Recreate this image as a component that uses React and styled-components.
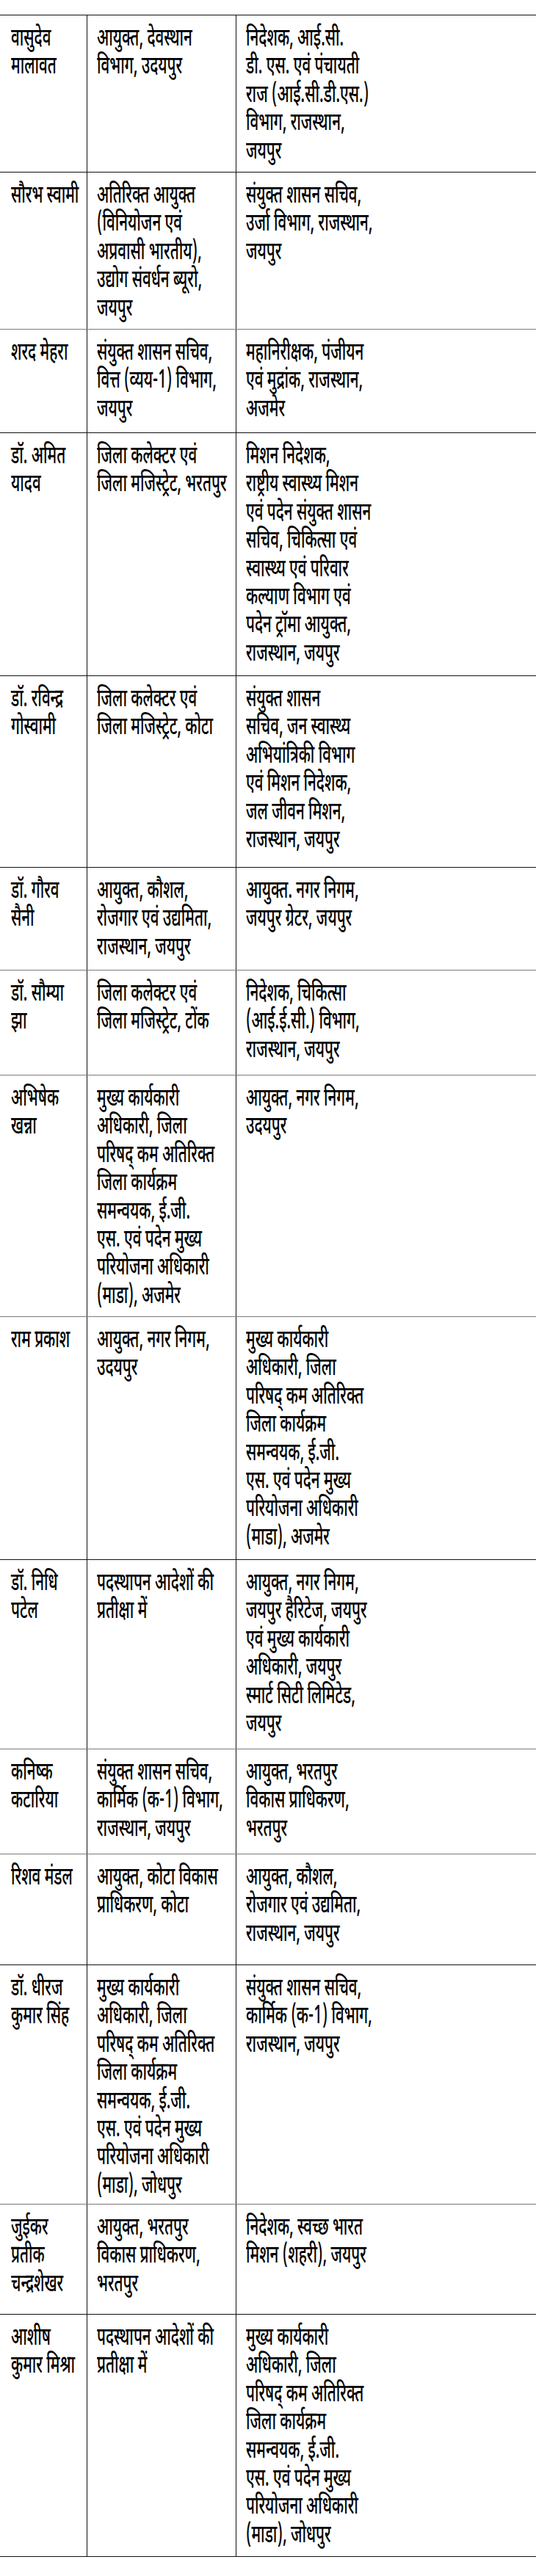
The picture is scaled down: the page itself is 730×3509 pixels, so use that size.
import React from "react";
import styled, { createGlobalStyle } from "styled-components";

const GlobalStyle = createGlobalStyle`
  html, body {
    margin: 0;
    padding: 0;
    background: #fff;
  }
  body {
    font-family: "Noto Sans Devanagari", "Noto Sans", sans-serif;
    color: #000;
    overflow-x: hidden;
  }
`;

const Page = styled.div`
  width: 730px;
  padding-top: 20px;
  padding-bottom: 27px;
`;

const Table = styled.div`
  border-top: 1px solid #111;
`;

const Row = styled.div`
  display: grid;
  grid-template-columns: 119px 203px 1fr;
  height: ${(p) => p.h}px;
  border-bottom: 1px solid ${(p) => (p.soft ? "#7a7a7a" : "#111")};
  box-sizing: border-box;
`;

const Cell = styled.div`
  padding: 14px 0 0 ${(p) => (p.first ? 15 : 13)}px;
  border-right: ${(p) => (p.last ? "none" : "1px solid #111")};
  font-size: 34px;
  font-weight: 500;
  line-height: 38.4px;
  min-width: 0;
`;

// the source type is a tall, narrow Devanagari face
const Line = styled.div`
  white-space: nowrap;
  transform: scaleX(0.605);
  transform-origin: 0 50%;
`;

const madaAjmer = [
  "मुख्य कार्यकारी",
  "अधिकारी, जिला",
  "परिषद् कम अतिरिक्त",
  "जिला कार्यक्रम",
  "समन्वयक, ई.जी.",
  "एस. एवं पदेन मुख्य",
  "परियोजना अधिकारी",
  "(माडा), अजमेर",
];

const madaJodhpur = [...madaAjmer.slice(0, 7), "(माडा), जोधपुर"];

const rows = [
  {
    h: 214,
    cells: [
      ["वासुदेव", "मालावत"],
      ["आयुक्त, देवस्थान", "विभाग, उदयपुर"],
      ["निदेशक, आई.सी.", "डी. एस. एवं पंचायती", "राज (आई.सी.डी.एस.)", "विभाग, राजस्थान,", "जयपुर"],
    ],
  },
  {
    h: 214,
    soft: true,
    cells: [
      ["सौरभ स्वामी"],
      ["अतिरिक्त आयुक्त", "(विनियोजन एवं", "अप्रवासी भारतीय),", "उद्योग संवर्धन ब्यूरो,", "जयपुर"],
      ["संयुक्त शासन सचिव,", "उर्जा विभाग, राजस्थान,", "जयपुर"],
    ],
  },
  {
    h: 141,
    cells: [
      ["शरद मेहरा"],
      ["संयुक्त शासन सचिव,", "वित्त (व्यय-1) विभाग,", "जयपुर"],
      ["महानिरीक्षक, पंजीयन", "एवं मुद्रांक, राजस्थान,", "अजमेर"],
    ],
  },
  {
    h: 331,
    cells: [
      ["डॉ. अमित", "यादव"],
      ["जिला कलेक्टर एवं", "जिला मजिस्ट्रेट, भरतपुर"],
      [
        "मिशन निदेशक,",
        "राष्ट्रीय स्वास्थ्य मिशन",
        "एवं पदेन संयुक्त शासन",
        "सचिव, चिकित्सा एवं",
        "स्वास्थ्य एवं परिवार",
        "कल्याण विभाग एवं",
        "पदेन ट्रॉमा आयुक्त,",
        "राजस्थान, जयपुर",
      ],
    ],
  },
  {
    h: 261,
    cells: [
      ["डॉ. रविन्द्र", "गोस्वामी"],
      ["जिला कलेक्टर एवं", "जिला मजिस्ट्रेट, कोटा"],
      ["संयुक्त शासन", "सचिव, जन स्वास्थ्य", "अभियांत्रिकी विभाग", "एवं मिशन निदेशक,", "जल जीवन मिशन,", "राजस्थान, जयपुर"],
    ],
  },
  {
    h: 140,
    soft: true,
    cells: [
      ["डॉ. गौरव", "सैनी"],
      ["आयुक्त, कौशल,", "रोजगार एवं उद्यमिता,", "राजस्थान, जयपुर"],
      ["आयुक्त. नगर निगम,", "जयपुर ग्रेटर, जयपुर"],
    ],
  },
  {
    h: 143,
    soft: true,
    cells: [
      ["डॉ. सौम्या", "झा"],
      ["जिला कलेक्टर एवं", "जिला मजिस्ट्रेट, टोंक"],
      ["निदेशक, चिकित्सा", "(आई.ई.सी.) विभाग,", "राजस्थान, जयपुर"],
    ],
  },
  {
    h: 329,
    soft: true,
    cells: [["अभिषेक", "खन्ना"], madaAjmer, ["आयुक्त, नगर निगम,", "उदयपुर"]],
  },
  {
    h: 331,
    cells: [["राम प्रकाश"], ["आयुक्त, नगर निगम,", "उदयपुर"], madaAjmer],
  },
  {
    h: 258,
    soft: true,
    cells: [
      ["डॉ. निधि", "पटेल"],
      ["पदस्थापन आदेशों की", "प्रतीक्षा में"],
      ["आयुक्त, नगर निगम,", "जयपुर हैरिटेज, जयपुर", "एवं मुख्य कार्यकारी", "अधिकारी, जयपुर", "स्मार्ट सिटी लिमिटेड,", "जयपुर"],
    ],
  },
  {
    h: 143,
    soft: true,
    cells: [
      ["कनिष्क", "कटारिया"],
      ["संयुक्त शासन सचिव,", "कार्मिक (क-1) विभाग,", "राजस्थान, जयपुर"],
      ["आयुक्त, भरतपुर", "विकास प्राधिकरण,", "भरतपुर"],
    ],
  },
  {
    h: 151,
    cells: [
      ["रिशव मंडल"],
      ["आयुक्त, कोटा विकास", "प्राधिकरण, कोटा"],
      ["आयुक्त, कौशल,", "रोजगार एवं उद्यमिता,", "राजस्थान, जयपुर"],
    ],
  },
  {
    h: 326,
    soft: true,
    cells: [
      ["डॉ. धीरज", "कुमार सिंह"],
      madaJodhpur,
      ["संयुक्त शासन सचिव,", "कार्मिक (क-1) विभाग,", "राजस्थान, जयपुर"],
    ],
  },
  {
    h: 150,
    cells: [
      ["जुईकर", "प्रतीक", "चन्द्रशेखर"],
      ["आयुक्त, भरतपुर", "विकास प्राधिकरण,", "भरतपुर"],
      ["निदेशक, स्वच्छ भारत", "मिशन (शहरी), जयपुर"],
    ],
  },
  {
    h: 330,
    cells: [["आशीष", "कुमार मिश्रा"], ["पदस्थापन आदेशों की", "प्रतीक्षा में"], madaJodhpur],
  },
];

export default function App() {
  return (
    <Page>
      <GlobalStyle />
      <Table>
        {rows.map((row, i) => (
          <Row key={i} h={row.h} soft={row.soft}>
            {row.cells.map((lines, j) => (
              <Cell key={j} first={j === 0} last={j === 2}>
                {lines.map((t, k) => (
                  <Line key={k}>{t}</Line>
                ))}
              </Cell>
            ))}
          </Row>
        ))}
      </Table>
    </Page>
  );
}
